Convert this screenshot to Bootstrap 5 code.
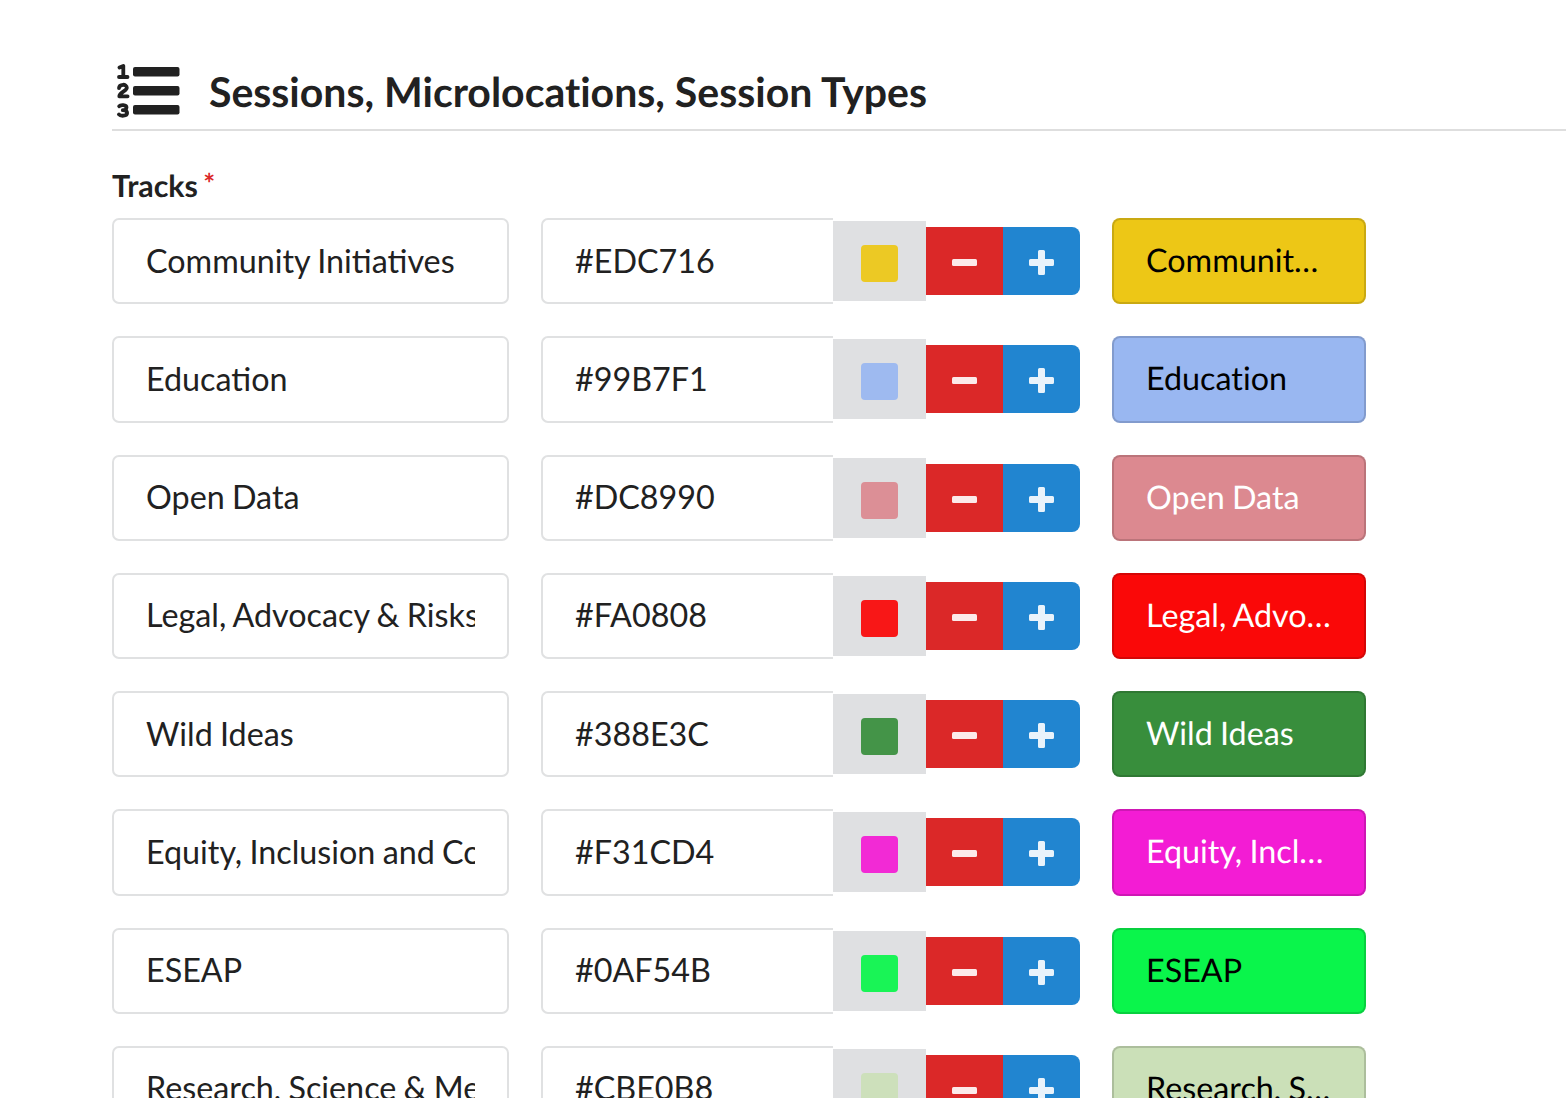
<!DOCTYPE html>
<html lang="en">
<head>
<meta charset="utf-8">
<title>Sessions, Microlocations, Session Types</title>
<link rel="stylesheet" href="https://cdn.jsdelivr.net/npm/bootstrap@5.3.0/dist/css/bootstrap.min.css">
<style>
html, body { height: 100%; overflow: hidden; background: #fff; }
body { font-family: Lato, "Liberation Sans", sans-serif; color: #212121; text-rendering: geometricPrecision; font-variant-ligatures: none; }
.page-wrap { padding: 57px 0 0 112px; }
.section-head { height: 74px; border-bottom: 2px solid #dedede; padding-left: 4px; gap: 28px; }
.section-head svg { width: 65px; height: 54px; flex: none; margin-top: -4px; }
.section-head h2 { font-size: 41px; font-weight: 700; line-height: 1; margin: 0; position: relative; top: -2px; color: #212121; }
.field-label { font-size: 30.4px; font-weight: 700; line-height: 1; margin: 40px 0 16.7px; color: #212121; }
.field-label span { color: #db2828; font-size: 28px; position: relative; top: -3px; margin-left: -2px; }
.track-row { height: 86.25px; margin-bottom: 32px; gap: 32px; }
.track-row .form-control { font-family: inherit; font-size: 32.3px; word-spacing: -1px; line-height: 1.2; color: #212121; border: 2px solid #e0e1e2; height: 100%; padding: 0 32px 2px; box-shadow: none; background: #fff; }
.name-box { width: 397px; border-radius: 7px; flex: none; }
.color-group { width: 539px; flex: none; }
.color-group .form-control.hex-box { width: 292px; flex: none; border-radius: 7px 0 0 7px; border-right: 0; }
.swatch-wrap { width: 93px; height: 80px; background: #dfe0e2; flex: none; padding-top: 5px; }
.swatch { width: 37px; height: 37px; border-radius: 4px; opacity: .93; }
.act-btn { width: 77px; height: 68px; border: 0; padding: 3px 0 0; border-radius: 0; flex: none; }
.act-btn svg { width: 25px; height: 25px; display: block; }
.act-minus, .act-minus:hover { background: #db2828; }
.act-plus, .act-plus:hover { background: #2185d0; border-radius: 0 8px 8px 0; }
.track-preview { width: 254px; flex: none; height: 100%; border: 2px solid rgba(0,0,0,.15); border-radius: 8px; padding: 0 32px; font-size: 32.3px; word-spacing: -1px; line-height: 80px; white-space: nowrap; overflow: hidden; text-overflow: ellipsis; }
.sw-1 { background: #EDC716; color: #000; } .sw-2 { background: #99B7F1; color: #000; }
.sw-3 { background: #DC8990; color: #fff; } .sw-4 { background: #FA0808; color: #fff; }
.sw-5 { background: #388E3C; color: #fff; } .sw-6 { background: #F31CD4; color: #fff; }
.sw-7 { background: #0AF54B; color: #000; } .sw-8 { background: #CBE0B8; color: #000; }
</style>
</head>
<body>
<svg width="0" height="0" class="position-absolute">
  <defs>
    <symbol id="i-minus" viewBox="0 0 25 25"><rect x="0" y="9" width="25" height="7" rx="1.5" fill="#fff" fill-opacity=".9"/></symbol>
    <symbol id="i-plus" viewBox="0 0 25 25"><path d="M9 1.5A1.5 1.5 0 0 1 10.500 0h4A1.500 1.500 0 0 1 16 1.500V9h7.500A1.500 1.500 0 0 1 25 10.500v4a1.500 1.500 0 0 1-1.500 1.500H16v7.500a1.500 1.500 0 0 1-1.500 1.500h-4A1.500 1.500 0 0 1 9 23.500V16H1.500A1.500 1.500 0 0 1 0 14.500v-4A1.500 1.500 0 0 1 1.500 9H9z" fill="#fff" fill-opacity=".9"/></symbol>
  </defs>
</svg>
<main class="page-wrap">
  <div class="section-head d-flex align-items-center">
    <svg viewBox="0 0 65 54" aria-hidden="true">
      <g fill="#212121"><rect x="17" y="3" width="46.500" height="9.500" rx="2"/><rect x="17" y="22" width="46.500" height="9.500" rx="2"/><rect x="17" y="41" width="46.500" height="9.500" rx="2"/></g>
      <g fill="none" stroke="#212121" stroke-width="3.800" stroke-linejoin="round" stroke-linecap="round">
        <path d="M3.500 3.600 7.300 2V13M3 13H11.500"/>
        <path d="M3 24.200c.3-4.500 7.800-4.500 7.800-.4 0 3.300-6.800 4-7.500 8.500h8.300"/>
        <path d="M3.200 42.200c1.200-1.500 7.300-1.700 7.300 1.200 0 2.300-2.500 2.800-3.700 2.800 1.500 0 4.300.5 4.300 2.900 0 3.300-6.700 3.200-8.200 1.300"/>
      </g>
    </svg>
    <h2>Sessions, Microlocations, Session Types</h2>
  </div>
  <div class="field-label">Tracks <span>*</span></div>

  <div class="track-row d-flex">
    <input class="form-control name-box" value="Community Initiatives" aria-label="Track name">
    <div class="color-group d-flex align-items-center"><input class="form-control hex-box" value="#EDC716" aria-label="Colour">
      <div class="swatch-wrap d-flex align-items-center justify-content-center"><div class="swatch sw-1"></div></div>
      <button class="btn act-btn act-minus d-flex align-items-center justify-content-center" aria-label="Remove"><svg><use href="#i-minus"/></svg></button><button class="btn act-btn act-plus d-flex align-items-center justify-content-center" aria-label="Add"><svg><use href="#i-plus"/></svg></button></div>
    <div class="track-preview sw-1">Community Initiatives</div>
  </div>
  <div class="track-row d-flex">
    <input class="form-control name-box" value="Education" aria-label="Track name">
    <div class="color-group d-flex align-items-center"><input class="form-control hex-box" value="#99B7F1" aria-label="Colour">
      <div class="swatch-wrap d-flex align-items-center justify-content-center"><div class="swatch sw-2"></div></div>
      <button class="btn act-btn act-minus d-flex align-items-center justify-content-center" aria-label="Remove"><svg><use href="#i-minus"/></svg></button><button class="btn act-btn act-plus d-flex align-items-center justify-content-center" aria-label="Add"><svg><use href="#i-plus"/></svg></button></div>
    <div class="track-preview sw-2">Education</div>
  </div>
  <div class="track-row d-flex">
    <input class="form-control name-box" value="Open Data" aria-label="Track name">
    <div class="color-group d-flex align-items-center"><input class="form-control hex-box" value="#DC8990" aria-label="Colour">
      <div class="swatch-wrap d-flex align-items-center justify-content-center"><div class="swatch sw-3"></div></div>
      <button class="btn act-btn act-minus d-flex align-items-center justify-content-center" aria-label="Remove"><svg><use href="#i-minus"/></svg></button><button class="btn act-btn act-plus d-flex align-items-center justify-content-center" aria-label="Add"><svg><use href="#i-plus"/></svg></button></div>
    <div class="track-preview sw-3">Open Data</div>
  </div>
  <div class="track-row d-flex">
    <input class="form-control name-box" value="Legal, Advocacy &amp; Risks" aria-label="Track name">
    <div class="color-group d-flex align-items-center"><input class="form-control hex-box" value="#FA0808" aria-label="Colour">
      <div class="swatch-wrap d-flex align-items-center justify-content-center"><div class="swatch sw-4"></div></div>
      <button class="btn act-btn act-minus d-flex align-items-center justify-content-center" aria-label="Remove"><svg><use href="#i-minus"/></svg></button><button class="btn act-btn act-plus d-flex align-items-center justify-content-center" aria-label="Add"><svg><use href="#i-plus"/></svg></button></div>
    <div class="track-preview sw-4">Legal, Advocacy &amp; Risks</div>
  </div>
  <div class="track-row d-flex">
    <input class="form-control name-box" value="Wild Ideas" aria-label="Track name">
    <div class="color-group d-flex align-items-center"><input class="form-control hex-box" value="#388E3C" aria-label="Colour">
      <div class="swatch-wrap d-flex align-items-center justify-content-center"><div class="swatch sw-5"></div></div>
      <button class="btn act-btn act-minus d-flex align-items-center justify-content-center" aria-label="Remove"><svg><use href="#i-minus"/></svg></button><button class="btn act-btn act-plus d-flex align-items-center justify-content-center" aria-label="Add"><svg><use href="#i-plus"/></svg></button></div>
    <div class="track-preview sw-5">Wild Ideas</div>
  </div>
  <div class="track-row d-flex">
    <input class="form-control name-box" value="Equity, Inclusion and Community" aria-label="Track name">
    <div class="color-group d-flex align-items-center"><input class="form-control hex-box" value="#F31CD4" aria-label="Colour">
      <div class="swatch-wrap d-flex align-items-center justify-content-center"><div class="swatch sw-6"></div></div>
      <button class="btn act-btn act-minus d-flex align-items-center justify-content-center" aria-label="Remove"><svg><use href="#i-minus"/></svg></button><button class="btn act-btn act-plus d-flex align-items-center justify-content-center" aria-label="Add"><svg><use href="#i-plus"/></svg></button></div>
    <div class="track-preview sw-6">Equity, Inclusion and Community</div>
  </div>
  <div class="track-row d-flex">
    <input class="form-control name-box" value="ESEAP" aria-label="Track name">
    <div class="color-group d-flex align-items-center"><input class="form-control hex-box" value="#0AF54B" aria-label="Colour">
      <div class="swatch-wrap d-flex align-items-center justify-content-center"><div class="swatch sw-7"></div></div>
      <button class="btn act-btn act-minus d-flex align-items-center justify-content-center" aria-label="Remove"><svg><use href="#i-minus"/></svg></button><button class="btn act-btn act-plus d-flex align-items-center justify-content-center" aria-label="Add"><svg><use href="#i-plus"/></svg></button></div>
    <div class="track-preview sw-7">ESEAP</div>
  </div>
  <div class="track-row d-flex">
    <input class="form-control name-box" value="Research, Science &amp; Medicine" aria-label="Track name">
    <div class="color-group d-flex align-items-center"><input class="form-control hex-box" value="#CBE0B8" aria-label="Colour">
      <div class="swatch-wrap d-flex align-items-center justify-content-center"><div class="swatch sw-8"></div></div>
      <button class="btn act-btn act-minus d-flex align-items-center justify-content-center" aria-label="Remove"><svg><use href="#i-minus"/></svg></button><button class="btn act-btn act-plus d-flex align-items-center justify-content-center" aria-label="Add"><svg><use href="#i-plus"/></svg></button></div>
    <div class="track-preview sw-8">Research, Science &amp; Medicine</div>
  </div>
</main>
<script src="https://cdn.jsdelivr.net/npm/bootstrap@5.3.0/dist/js/bootstrap.bundle.min.js"></script>
</body>
</html>
